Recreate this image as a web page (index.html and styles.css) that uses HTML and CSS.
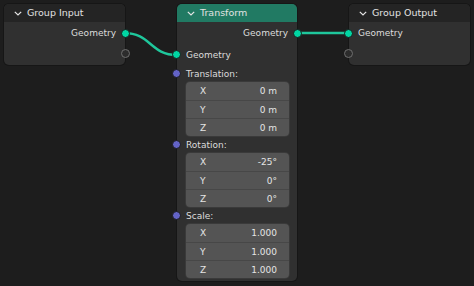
FILE: index.html
```html
<!DOCTYPE html>
<html>
	<head>
		<meta charset="utf-8">
		<title>Geometry Nodes - Transform</title>
		<link rel="stylesheet" href="styles.css">
	</head>
	<body>
		<div class="editor">
			<svg class="links" width="474" height="286">
				<path d="M124 33 C151 33, 150 55, 177 55" />
				<path d="M297 33 L349 33" />
			</svg>

			<!-- Group Input -->
			<div class="node group-input">
				<div class="header">
					<svg class="chevron" width="8" height="5" viewBox="0 0 8 5"><polyline points="0.8,0.8 4,4 7.2,0.8" /></svg>
					<span>Group Input</span>
				</div>
				<div class="body">
					<div class="row out">Geometry<i class="socket geo right"></i></div>
					<div class="row out"><i class="socket empty right"></i></div>
				</div>
			</div>

			<!-- Transform -->
			<div class="node transform">
				<div class="header">
					<svg class="chevron" width="8" height="5" viewBox="0 0 8 5"><polyline points="0.8,0.8 4,4 7.2,0.8" /></svg>
					<span>Transform</span>
				</div>
				<div class="body">
					<div class="row out">Geometry<i class="socket geo right"></i></div>
					<div class="row in last">
						<i class="socket geo left"></i>Geometry
					</div>

					<div class="label"><i class="socket vec left"></i>Translation:</div>
					<div class="fields">
						<div class="field"><span>X</span><span>0 m</span></div>
						<div class="field"><span>Y</span><span>0 m</span></div>
						<div class="field"><span>Z</span><span>0 m</span></div>
					</div>

					<div class="label"><i class="socket vec left"></i>Rotation:</div>
					<div class="fields">
						<div class="field"><span>X</span><span>-25°</span></div>
						<div class="field"><span>Y</span><span>0°</span></div>
						<div class="field"><span>Z</span><span>0°</span></div>
					</div>

					<div class="label"><i class="socket vec left"></i>Scale:</div>
					<div class="fields">
						<div class="field"><span>X</span><span>1.000</span></div>
						<div class="field"><span>Y</span><span>1.000</span></div>
						<div class="field"><span>Z</span><span>1.000</span></div>
					</div>
				</div>
			</div>

			<!-- Group Output -->
			<div class="node group-output">
				<div class="header">
					<svg class="chevron" width="8" height="5" viewBox="0 0 8 5"><polyline points="0.8,0.8 4,4 7.2,0.8" /></svg>
					<span>Group Output</span>
				</div>
				<div class="body">
					<div class="row in"><i class="socket geo left"></i>Geometry</div>
					<div class="row in"><i class="socket empty left"></i></div>
				</div>
			</div>
		</div>
	</body>
</html>
```

FILE: styles.css
```css
body {
	margin: 0;
	background-color: #1d1d1d;
	font-family: "DejaVu Sans", sans-serif;
	font-size: 9px;
	color: #dcdcdc;
}

.editor {
	position: relative;
	width: 474px;
	height: 286px;
	overflow: hidden;
}

.links {
	position: absolute;
	left: 0;
	top: 0;
	z-index: 2;
}

.links path {
	fill: none;
	stroke: #1fc79c;
	stroke-width: 2.4;
}

/* nodes sit on a free canvas */
.node {
	position: absolute;
	top: 4px;
	background-color: #303030;
	border-radius: 5px;
	box-shadow: 0 0 0 1px #161616;
}

.group-input {
	left: 4px;
	width: 121px;
	height: 61px;
}

.transform {
	left: 177px;
	width: 120px;
	height: 277px;
}

.group-output {
	left: 349px;
	width: 121px;
	height: 61px;
}

.header {
	display: flex;
	align-items: center;
	gap: 5px;
	height: 18px;
	padding-left: 10px;
	background-color: #242424;
	border-radius: 5px 5px 0 0;
	color: #e2e2e2;
	font-size: 9.5px;
}

.header span {
	margin-top: -1px;
}

.transform .header {
	background-color: #217a63;
}

.chevron polyline {
	fill: none;
	stroke: #e6e6e6;
	stroke-width: 1.2;
}

.group-input .body,
.group-output .body {
	padding-top: 1px;
}

.row {
	position: relative;
	display: flex;
	align-items: center;
	height: 20px;
}

.transform .row {
	height: 22px;
}

.transform .row.last {
	height: 21px;
}

.row.out {
	justify-content: flex-end;
	padding-right: 9px;
}

.row.in {
	padding-left: 9px;
}

.socket {
	position: absolute;
	top: 50%;
	width: 7px;
	height: 7px;
	margin-top: -4.5px;
	border-radius: 50%;
	border: 1px solid #1a1a1a;
	z-index: 3;
}

.socket.right {
	right: -5px;
}

.socket.left {
	left: -5px;
}

.socket.geo {
	background-color: #00d6a3;
}

.socket.vec {
	background-color: #6363c7;
}

.socket.empty {
	background-color: #2c2c2c;
	border: 1px solid #6f6f6f;
}

.label {
	position: relative;
	display: flex;
	align-items: center;
	height: 17px;
	padding-left: 9px;
}

.fields {
	margin: 0 8px 0 9px;
	background-color: #545454;
	border-radius: 4px;
	box-shadow: 0 0 0 1px #3a3a3a;
	overflow: hidden;
}

.field {
	display: flex;
	justify-content: space-between;
	align-items: center;
	box-sizing: border-box;
	height: 18px;
	padding: 0 12px 0 14px;
	color: #e4e4e4;
}

.field + .field {
	border-top: 1px solid #474747;
}
```
